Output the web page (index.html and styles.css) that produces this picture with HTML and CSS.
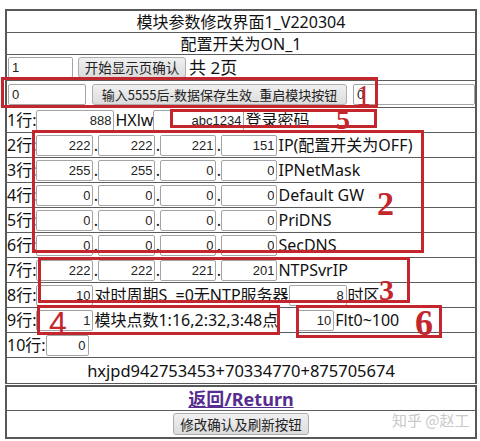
FILE: index.html
```html
<!DOCTYPE html>
<html lang="zh">
<head>
<meta charset="utf-8">
<title>模块参数修改界面</title>
<link rel="stylesheet" href="styles.css">
</head>
<body>
<div class="page">
  <div class="tbl top">
    <div class="row title">模块参数修改界面1_V220304</div>
    <div class="row title">配置开关为ON_1</div>
    <div class="row r3">
      <input class="in left w65" value="1">
      <button class="btn b1">开始显示页确认</button>
      <span class="txt pages">共 2页</span>
    </div>
    <div class="row r4">
      <input class="in left w78" value="0">
      <button class="btn b2">输入5555后-数据保存生效_重启模块按钮</button>
      <input class="in left w122" value="0">
    </div>
    <div class="row line">
      <span class="lbl">1行:</span>
      <input class="in w78" value="888">
      <span class="txt">HXlw</span>
      <input class="in w91" value="abc1234">
      <span class="txt">登录密码</span>
    </div>
    <div class="row line">
      <span class="lbl">2行:</span>
      <input class="in w57" value="222"><span class="dot">.</span><input class="in w57" value="222"><span class="dot">.</span><input class="in w56" value="221"><span class="dot">.</span><input class="in w56" value="151">
      <span class="txt">IP(配置开关为OFF)</span>
    </div>
    <div class="row line">
      <span class="lbl">3行:</span>
      <input class="in w57" value="255"><span class="dot">.</span><input class="in w57" value="255"><span class="dot">.</span><input class="in w56" value="0"><span class="dot">.</span><input class="in w56" value="0">
      <span class="txt">IPNetMask</span>
    </div>
    <div class="row line">
      <span class="lbl">4行:</span>
      <input class="in w57" value="0"><span class="dot">.</span><input class="in w57" value="0"><span class="dot">.</span><input class="in w56" value="0"><span class="dot">.</span><input class="in w56" value="0">
      <span class="txt">Default GW</span>
    </div>
    <div class="row line">
      <span class="lbl">5行:</span>
      <input class="in w57" value="0"><span class="dot">.</span><input class="in w57" value="0"><span class="dot">.</span><input class="in w56" value="0"><span class="dot">.</span><input class="in w56" value="0">
      <span class="txt">PriDNS</span>
    </div>
    <div class="row line">
      <span class="lbl">6行:</span>
      <input class="in w57" value="0"><span class="dot">.</span><input class="in w57" value="0"><span class="dot">.</span><input class="in w56" value="0"><span class="dot">.</span><input class="in w56" value="0">
      <span class="txt">SecDNS</span>
    </div>
    <div class="row line">
      <span class="lbl">7行:</span>
      <input class="in w57" value="222"><span class="dot">.</span><input class="in w57" value="222"><span class="dot">.</span><input class="in w56" value="221"><span class="dot">.</span><input class="in w56" value="201">
      <span class="txt">NTPSvrIP</span>
    </div>
    <div class="row line">
      <span class="lbl">8行:</span>
      <input class="in w57" value="10">
      <span class="txt">对时周期S&nbsp;&nbsp;=0无NTP服务器</span>
      <input class="in w58" value="8">
      <span class="txt">时区</span>
    </div>
    <div class="row line">
      <span class="lbl">9行:</span>
      <input class="in w57" value="1">
      <span class="txt">模块点数1:16,2:32,3:48点</span>
      <input class="in w38 flt" value="10">
      <span class="txt">Flt0~100</span>
    </div>
    <div class="row line">
      <span class="lbl">10行:</span>
      <input class="in w43" value="0">
    </div>
    <div class="row line center last sig">hxjpd942753453+70334770+875705674</div>
  </div>
  <div class="tbl bottom">
    <div class="row ret center"><a class="link" href="#">返回/Return</a></div>
    <div class="row act center last"><button class="btn b3">修改确认及刷新按钮</button></div>
  </div>

  <div class="mark m1"></div>
  <div class="mark m5"></div>
  <div class="mark m2"></div>
  <div class="mark m3"></div>
  <div class="mark m4"></div>
  <div class="mark m6"></div>
  <span class="num n1">1</span>
  <span class="num n5">5</span>
  <span class="num n2">2</span>
  <span class="num n3">3</span>
  <span class="num sans n4">4</span>
  <span class="num n6">6</span>
  <span class="watermark">知乎 @赵工</span>
</div>
</body>
</html>
```

FILE: styles.css
```css
html, body {
  margin: 0;
  padding: 0;
  background: #ffffff;
}

.page {
  position: relative;
  width: 480px;
  height: 441px;
  padding: 9px 0 0 5px;
  box-sizing: border-box;
  font-family: "Noto Sans", "Noto Sans CJK SC", sans-serif;
  font-size: 16px;
  color: #111;
}

.tbl {
  width: 472px;
  box-sizing: border-box;
  border: 2px solid #585858;
  border-bottom-width: 1px;
}

.tbl.top {
  border-top-width: 2px;
}

.tbl.bottom {
  margin-top: 1px;
  border-bottom-width: 2px;
}

.row {
  display: flex;
  align-items: center;
  box-sizing: border-box;
  border-bottom: 1px solid #5c5c5c;
  white-space: nowrap;
  line-height: 20px;
}

.row.last {
  border-bottom: none;
}

.title {
  justify-content: center;
  height: 22px;
}

.r3 {
  height: 26px;
  padding-left: 1px;
}

.r4 {
  height: 27px;
  padding-left: 1px;
}

.line {
  height: 25px;
}

.center {
  justify-content: center;
}

.sig {
  font-size: 16.5px;
}

.ret {
  height: 24px;
}

.act {
  height: 26px;
}

.lbl {
  padding-left: 0;
}

.txt {
  padding-left: 1px;
}

.pages {
  font-size: 17px;
  padding-left: 3px;
}

.dot {
  width: 5px;
  text-align: center;
}

.in {
  box-sizing: border-box;
  height: 21px;
  border: 1px solid #a4a4a4;
  border-radius: 2px;
  padding: 0 2px;
  font-family: "Liberation Sans", Arial, sans-serif;
  font-size: 13px;
  color: #222;
  text-align: right;
  background: #fff;
  margin: 0;
}

.in.left {
  text-align: left;
  padding-left: 3px;
}

.w38 { width: 38px; }
.w43 { width: 43px; }
.w56 { width: 56px; }
.w57 { width: 57px; }
.w58 { width: 58px; }
.w65 { width: 65px; }
.w78 { width: 78px; }
.w91 { width: 91px; }
.w122 { width: 122px; }

.flt {
  margin-left: 18px;
}

.btn {
  box-sizing: border-box;
  height: 21px;
  margin: 0;
  padding: 0;
  border: 1px solid #adadad;
  border-radius: 3px;
  background: linear-gradient(#f0f0f0, #dcdcdc);
  font-family: "Noto Sans CJK SC", "Noto Sans", sans-serif;
  font-size: 13.5px;
  color: #222;
  line-height: 19px;
}

.b1 {
  width: 108px;
  margin-left: 5px;
}

.b2 {
  width: 255px;
  margin: 0 6px;
  font-size: 13px;
}

.b3 {
  width: 136px;
  height: 22px;
}

.link {
  font-weight: bold;
  font-size: 18px;
  color: #572d8f;
  text-decoration: underline;
}

.mark {
  position: absolute;
  box-sizing: border-box;
  border: 3px solid #c4262e;
}

.m1 { left: 1px; top: 77px; width: 377px; height: 31px; }
.m5 { left: 170px; top: 109px; width: 207px; height: 19px; }
.m2 { left: 32px; top: 130px; width: 392px; height: 123px; }
.m3 { left: 38px; top: 257px; width: 372px; height: 46px; }
.m4 { left: 37px; top: 305px; width: 243px; height: 30px; }
.m6 { left: 296px; top: 305px; width: 146px; height: 33px; }

.num {
  position: absolute;
  font-family: "Liberation Serif", "Times New Roman", serif;
  font-weight: bold;
  color: #c4262e;
  line-height: 1;
}

.num.sans {
  font-family: "Liberation Sans", Arial, sans-serif;
  font-weight: normal;
}

.n1 { left: 356px; top: 80px; font-size: 30px; font-weight: normal; }
.n5 { left: 336px; top: 106px; font-size: 28px; }
.n2 { left: 377px; top: 187px; font-size: 34px; }
.n3 { left: 379px; top: 275px; font-size: 30px; }
.n4 { left: 49px; top: 307px; font-size: 32px; }
.n6 { left: 415px; top: 305px; font-size: 36px; }

.watermark {
  position: absolute;
  left: 392px;
  top: 410px;
  font-family: "Noto Sans CJK SC", sans-serif;
  font-size: 15px;
  color: #c9c9c9;
  line-height: 20px;
}
```
